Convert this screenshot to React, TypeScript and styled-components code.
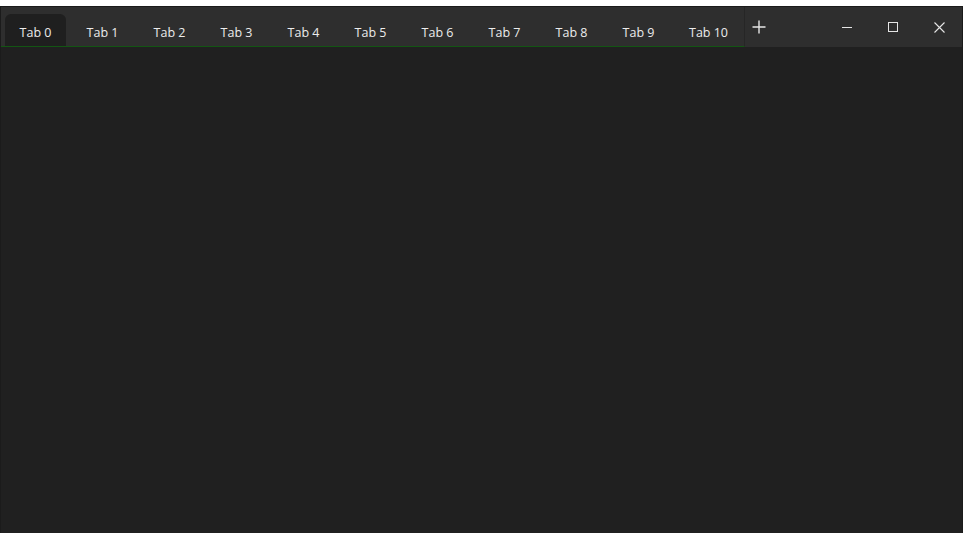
import React, { useState } from "react";
import styled, { createGlobalStyle } from "styled-components";

const GlobalStyle = createGlobalStyle`
    html, body {
        margin: 0;
        padding: 0;
        background: #ffffff;
        height: 100%;
        overflow: hidden;
    }
    #root {
        box-sizing: border-box;
        height: 100%;
        padding-top: 6px;
    }
`

const Window = styled.div`
    display: flex;
    flex-direction: column;
    box-sizing: border-box;
    height: 527px;
    border: 1px solid #1b1b1b;
    border-bottom: none;
    background: #202020;
    font-family: "Open Sans", "Noto Sans", sans-serif;
`

const TitleBar = styled.div`
    display: flex;
    flex-direction: row;
    align-items: stretch;
    height: 40px;
    background: #2e2e2e;
    flex-shrink: 0;
`

const TabStrip = styled.div`
    display: flex;
    flex-direction: row;
    align-items: flex-end;
    gap: 6px;
    padding: 0 2px 0 4px;
    border-bottom: 1px solid #135513;
    border-right: 1px solid #262626;
`

const Tab = styled.div<{ $active: boolean }>`
    box-sizing: border-box;
    min-width: 61px;
    height: 32px;
    padding: 4px 14px 0;
    display: flex;
    align-items: center;
    justify-content: center;
    font-size: 12.5px;
    color: #ececec;
    white-space: nowrap;
    cursor: default;
    background: ${p => (p.$active ? "#1f1f1f" : "transparent")};
    border-radius: 6px 6px 0 0;
`

const AddButton = styled.div`
    width: 24px;
    display: flex;
    align-items: center;
    justify-content: center;
    padding-bottom: 1px;
    margin-left: 2px;
`

const Spacer = styled.div`
    flex: 1;
`

const CaptionButton = styled.div`
    width: 46px;
    display: flex;
    align-items: center;
    justify-content: center;
`

const Content = styled.div`
    flex: 1;
    background: #202020;
`

const stroke = "#e6e6e6";

const tabs = Array.from({ length: 11 }, (_, i) => `Tab ${i}`);

export default function App() {
    const [active, setActive] = useState(0);

    return (
        <>
            <GlobalStyle />
            <Window>
                <TitleBar>
                    <TabStrip>
                        {tabs.map((t, i) => (
                            <Tab key={t} $active={i === active} onClick={() => setActive(i)}>
                                {t}
                            </Tab>
                        ))}
                    </TabStrip>
                    <AddButton>
                        <svg width="14" height="14" viewBox="0 0 14 14">
                            <path d="M7 0.5V13.5M0.5 7H13.5" stroke={stroke} strokeWidth="1.4" />
                        </svg>
                    </AddButton>
                    <Spacer />
                    <CaptionButton>
                        <svg width="10" height="10" viewBox="0 0 10 10">
                            <path d="M0 5.5H10" stroke={stroke} strokeWidth="1" />
                        </svg>
                    </CaptionButton>
                    <CaptionButton>
                        <svg width="10" height="10" viewBox="0 0 10 10">
                            <rect x="0.5" y="0.5" width="9" height="9" fill="none" stroke={stroke} strokeWidth="1" />
                        </svg>
                    </CaptionButton>
                    <CaptionButton>
                        <svg width="11" height="11" viewBox="0 0 11 11">
                            <path d="M0.5 0.5L10.5 10.5M10.5 0.5L0.5 10.5" stroke={stroke} strokeWidth="1.1" />
                        </svg>
                    </CaptionButton>
                </TitleBar>
                <Content />
            </Window>
        </>
    );
}
